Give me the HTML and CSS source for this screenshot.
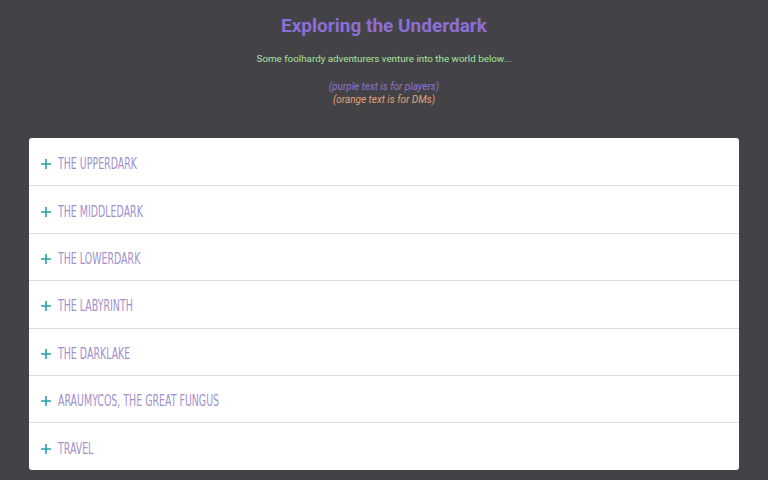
FILE: index.html
```html
<!DOCTYPE html>
<html lang="en">
<head>
    <meta charset="UTF-8">
    <meta name="viewport" content="width=device-width, initial-scale=1.0">
    <title>Exploring the Underdark</title>
    <link rel="stylesheet" href="styles.css">
</head>
<body>
    <header class="intro">
        <h1>Exploring the Underdark</h1>
        <p class="tagline">Some foolhardy adventurers venture into the world below...</p>
        <p class="legend legend-players">(purple text is for players)</p>
        <p class="legend legend-dms">(orange text is for DMs)</p>
    </header>

    <div class="accordion">
        <div class="accordion-item">
            <svg class="toggle" viewBox="0 0 10 10"><path d="M5 0V10M0 5H10"/></svg>
            <span class="label">The Upperdark</span>
        </div>
        <div class="accordion-item">
            <svg class="toggle" viewBox="0 0 10 10"><path d="M5 0V10M0 5H10"/></svg>
            <span class="label">The Middledark</span>
        </div>
        <div class="accordion-item">
            <svg class="toggle" viewBox="0 0 10 10"><path d="M5 0V10M0 5H10"/></svg>
            <span class="label">The Lowerdark</span>
        </div>
        <div class="accordion-item">
            <svg class="toggle" viewBox="0 0 10 10"><path d="M5 0V10M0 5H10"/></svg>
            <span class="label">The Labyrinth</span>
        </div>
        <div class="accordion-item">
            <svg class="toggle" viewBox="0 0 10 10"><path d="M5 0V10M0 5H10"/></svg>
            <span class="label">The Darklake</span>
        </div>
        <div class="accordion-item">
            <svg class="toggle" viewBox="0 0 10 10"><path d="M5 0V10M0 5H10"/></svg>
            <span class="label">Araumycos, the Great Fungus</span>
        </div>
        <div class="accordion-item">
            <svg class="toggle" viewBox="0 0 10 10"><path d="M5 0V10M0 5H10"/></svg>
            <span class="label">Travel</span>
        </div>
    </div>
</body>
</html>
```

FILE: styles.css
```css
body {
    font-family: 'Roboto', sans-serif;
    margin: 0;
    padding: 0;
    background: #434247;
}

.intro {
    text-align: center;
    padding-top: 12px;
}

h1 {
    margin: 0;
    color: #8c6fd4;
    font-size: 19px;
    font-weight: 700;
    line-height: 27px;
}

.tagline {
    margin: 14px 0 0;
    color: #a7e3a0;
    font-size: 9.8px;
    line-height: 12px;
}

.legend {
    margin: 0;
    font-size: 10px;
    font-style: italic;
    line-height: 13px;
}

.legend-players {
    margin-top: 15px;
    color: #8f75d0;
}

.legend-dms {
    color: #e0a378;
}

.accordion {
    margin: 32px 29px 0;
    background: #fff;
    border-radius: 3px;
    overflow: hidden;
}

.accordion-item {
    box-sizing: border-box;
    height: 47.4px;
    display: flex;
    align-items: center;
    padding: 4px 0 0 12px;
    border-top: 1px solid #dddddd;
}

.accordion-item:first-child {
    border-top: none;
}

.toggle {
    width: 10px;
    height: 10px;
    margin-right: 7px;
    stroke: #23a3a9;
    stroke-width: 1.6;
    fill: none;
}

.label {
    display: inline-block;
    color: #a291cc;
    font-family: 'DejaVu Sans Condensed', 'DejaVu Sans', sans-serif;
    font-size: 15px;
    text-transform: uppercase;
    transform: scaleX(0.7);
    transform-origin: left center;
    white-space: nowrap;
}
```
